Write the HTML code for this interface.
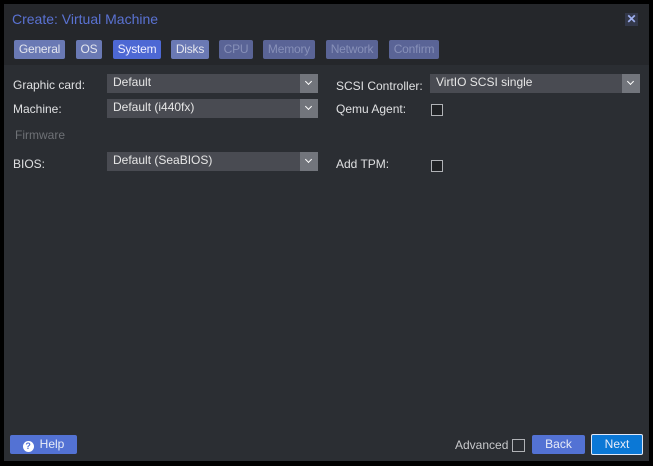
<!DOCTYPE html><html><head><style>
body{margin:0;background:#000;width:653px;height:466px;position:relative;overflow:hidden;font-family:"Liberation Sans",sans-serif;font-size:12px;color:#dfe0e2}
.win{position:absolute;left:4px;top:4px;width:645px;height:457px;background:#2b2e33}
.hdr{position:absolute;left:0;top:0;width:645px;height:61px;background:#25272b}
.a{position:absolute}
.tab{position:absolute;top:36px;height:19px;line-height:19px;border-radius:2px;text-align:center;color:#e4e6ee;background:#6a79b4;font-size:12px;letter-spacing:-0.2px}
.dis{background:#5a6496;color:#8790b8}
.cmb{position:absolute;height:19px;background:#494b52;color:#e6e6e6;line-height:16px;padding-left:6px;box-sizing:border-box}
.cmb .t{position:absolute;right:0;top:0;width:18px;height:19px;background:#72757c}
.cmb .t:after{content:"";position:absolute;left:6px;top:5px;width:4px;height:4px;border-right:1.5px solid #fff;border-bottom:1.5px solid #fff;transform:rotate(45deg)}
.cb{position:absolute;width:10px;height:10px;border:1px solid #b0b2b6;background:#1f2124}
.btn{position:absolute;top:431px;height:19px;line-height:19px;border-radius:2px;background:#5372d4;color:#e8ecf8;text-align:center}
</style></head><body><div class="win">
<div class="hdr"></div>
<div class="a" style="left:8px;top:7px;font-size:14px;color:#5a72d2">Create: Virtual Machine</div>
<div class="a" style="left:621px;top:9px;width:13px;height:13px;background:#33384a;color:#9fb0f0;font-size:12px;line-height:13px;text-align:center;font-weight:bold">✕</div>
<div class="tab" style="left:10px;width:51px">General</div>
<div class="tab" style="left:72px;width:26px">OS</div>
<div class="tab" style="left:109px;width:48px;background:#4d68d4;color:#eef">System</div>
<div class="tab" style="left:167px;width:38px">Disks</div>
<div class="tab dis" style="left:215px;width:34px">CPU</div>
<div class="tab dis" style="left:259px;width:52px">Memory</div>
<div class="tab dis" style="left:322px;width:52px">Network</div>
<div class="tab dis" style="left:385px;width:50px">Confirm</div>
<div class="a" style="left:9px;top:74px">Graphic card:</div>
<div class="a" style="left:9px;top:98px">Machine:</div>
<div class="a" style="left:11px;top:124px;color:#6e7176;font-size:12px">Firmware</div>
<div class="a" style="left:9px;top:153px">BIOS:</div>
<div class="cmb" style="left:103px;top:70px;width:211px">Default<div class="t"></div></div>
<div class="cmb" style="left:103px;top:95px;width:211px">Default (i440fx)<div class="t"></div></div>
<div class="cmb" style="left:103px;top:148px;width:211px">Default (SeaBIOS)<div class="t"></div></div>
<div class="a" style="left:332px;top:75px">SCSI Controller:</div>
<div class="a" style="left:332px;top:98px">Qemu Agent:</div>
<div class="a" style="left:332px;top:153px">Add TPM:</div>
<div class="cmb" style="left:426px;top:70px;width:210px">VirtIO SCSI single<div class="t"></div></div>
<div class="cb" style="left:427px;top:100px"></div>
<div class="cb" style="left:427px;top:156px"></div>
<div class="btn" style="left:6px;width:67px"><span style="display:inline-block;width:11px;height:11px;border-radius:50%;background:#fff;color:#5372d4;font-size:9px;line-height:11px;font-weight:bold;vertical-align:-1px;margin-right:6px">?</span>Help</div>
<div class="a" style="left:451px;top:434px;color:#c8c9cc">Advanced</div>
<div class="cb" style="left:508px;top:435px;width:11px;height:11px;background:#2b2e33"></div>
<div class="btn" style="left:528px;width:53px">Back</div>
<div class="btn" style="left:587px;width:50px;background:#0b78d6;border:1px solid #e0e8f8;top:430px">Next</div>
</div></body></html>
